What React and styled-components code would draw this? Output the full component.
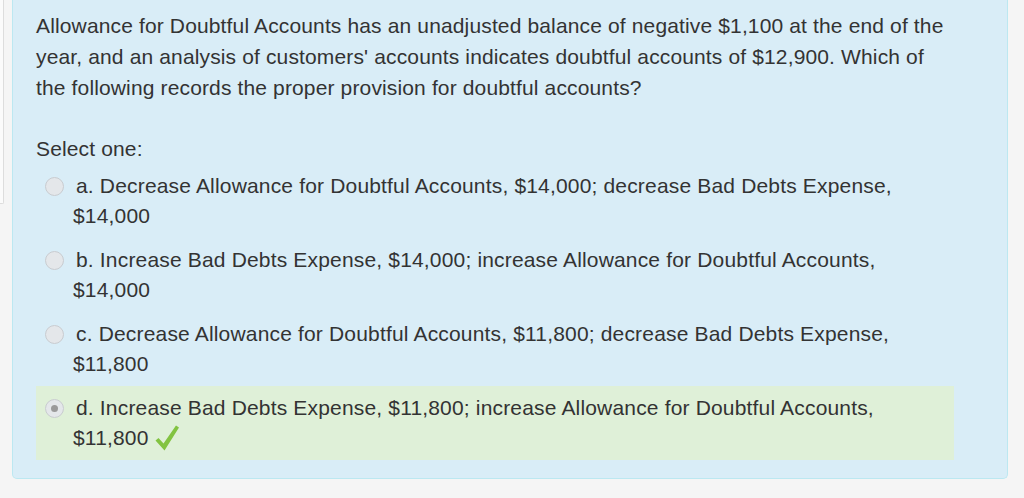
import React from "react";
import styled, { createGlobalStyle } from "styled-components";

const GlobalStyle = createGlobalStyle`
  html, body {
    margin: 0;
    padding: 0;
    background: #f5f5f5;
  }
  body {
    font-family: "Liberation Sans", Arial, sans-serif;
    color: #333333;
  }
`;

const Page = styled.div`
  display: flex;
  align-items: flex-start;
  width: 1024px;
  height: 498px;
  overflow: hidden;
`;

const SideStub = styled.div`
  width: 3px;
  height: 203px;
  background: #fbfbfb;
  border-right: 1px solid #dddddd;
  border-bottom: 1px solid #dddddd;
  border-bottom-right-radius: 2px;
`;

const Panel = styled.div`
  margin-left: 8px;
  width: 996px;
  box-sizing: border-box;
  background: #d9edf7;
  border: 1px solid #bce8f1;
  border-top: 0;
  border-radius: 0 0 5px 5px;
  padding: 10px 53px 18px 23px;
`;

const QuestionText = styled.p`
  margin: 0 0 31px 0;
  font-size: 21px;
  line-height: 31px;
  letter-spacing: 0.14px;
`;

const Prompt = styled.div`
  font-size: 21px;
  line-height: 30px;
  letter-spacing: 0.14px;
`;

const Option = styled.div`
  display: flex;
  align-items: flex-start;
  padding: 7px 0 7px 9px;
  background: ${(p) => (p.$correct ? "#dff0d8" : "transparent")};
`;

const Radio = styled.span`
  flex: none;
  width: 17px;
  height: 17px;
  margin: 6px 9px 0 0;
  border-radius: 50%;
  border: 1px solid #c9ccd0;
  background: #e4e7ea;
  display: flex;
  align-items: center;
  justify-content: center;

  &::after {
    content: "";
    width: 7px;
    height: 7px;
    border-radius: 50%;
    background: ${(p) => (p.$checked ? "#9a9a9a" : "transparent")};
  }
`;

const Label = styled.div`
  font-size: 21px;
  line-height: 30px;
  text-indent: 3px;
  letter-spacing: 0.17px;
`;

const Tick = styled.svg`
  width: 24px;
  height: 26px;
  margin-left: 6px;
  vertical-align: -6px;
`;

const CheckMark = () => (
  <Tick viewBox="0 0 24 26">
    <path d="M0.5 15.5 L3.5 13 L8.5 18.5 L21 0.5 L24 2.5 L9.5 25.5 Z" fill="#82c341" />
  </Tick>
);

const options = [
  {
    text: "a. Decrease Allowance for Doubtful Accounts, $14,000; decrease Bad Debts Expense, $14,000",
  },
  {
    text: "b. Increase Bad Debts Expense, $14,000; increase Allowance for Doubtful Accounts, $14,000",
  },
  {
    text: "c. Decrease Allowance for Doubtful Accounts, $11,800; decrease Bad Debts Expense, $11,800",
  },
  {
    text: "d. Increase Bad Debts Expense, $11,800; increase Allowance for Doubtful Accounts, $11,800",
    checked: true,
  },
];

const App = () => {
  return (
    <>
      <GlobalStyle />
      <Page>
        <SideStub />
        <Panel>
          <QuestionText>
            Allowance for Doubtful Accounts has an unadjusted balance of negative $1,100 at the
            end of the year, and an analysis of customers' accounts indicates doubtful accounts of
            $12,900. Which of the following records the proper provision for doubtful accounts?
          </QuestionText>
          <Prompt>Select one:</Prompt>
          {options.map((o) => (
            <Option key={o.text} $correct={o.checked}>
              <Radio $checked={o.checked} />
              <Label>
                {o.text}
                {o.checked && <CheckMark />}
              </Label>
            </Option>
          ))}
        </Panel>
      </Page>
    </>
  );
};

export default App;
